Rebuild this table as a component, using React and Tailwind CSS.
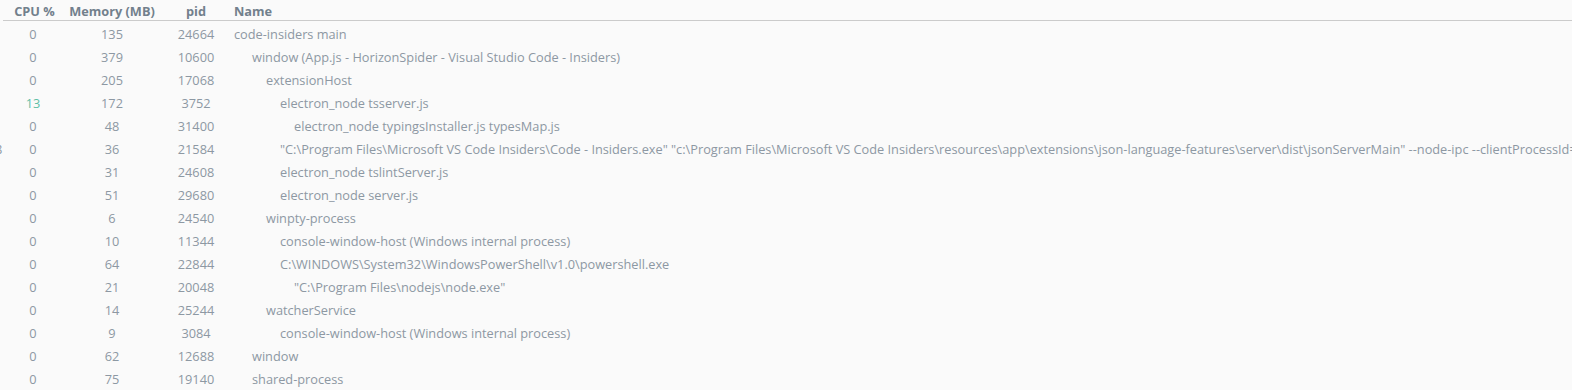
import React from 'react';

const rows = [
  { cpu: 0, mem: 135, pid: 24664, depth: 0, name: 'code-insiders main' },
  { cpu: 0, mem: 379, pid: 10600, depth: 1, name: 'window (App.js - HorizonSpider - Visual Studio Code - Insiders)' },
  { cpu: 0, mem: 205, pid: 17068, depth: 2, name: 'extensionHost' },
  { cpu: 13, mem: 172, pid: 3752, depth: 3, name: 'electron_node tsserver.js' },
  { cpu: 0, mem: 48, pid: 31400, depth: 4, name: 'electron_node typingsInstaller.js typesMap.js' },
  { cpu: 0, mem: 36, pid: 21584, depth: 3, name: '"C:\\Program Files\\Microsoft VS Code Insiders\\Code - Insiders.exe" "c:\\Program Files\\Microsoft VS Code Insiders\\resources\\app\\extensions\\json-language-features\\server\\dist\\jsonServerMain" --node-ipc --clientProcessId=17068', mark: true },
  { cpu: 0, mem: 31, pid: 24608, depth: 3, name: 'electron_node tslintServer.js' },
  { cpu: 0, mem: 51, pid: 29680, depth: 3, name: 'electron_node server.js' },
  { cpu: 0, mem: 6, pid: 24540, depth: 2, name: 'winpty-process' },
  { cpu: 0, mem: 10, pid: 11344, depth: 3, name: 'console-window-host (Windows internal process)' },
  { cpu: 0, mem: 64, pid: 22844, depth: 3, name: 'C:\\WINDOWS\\System32\\WindowsPowerShell\\v1.0\\powershell.exe' },
  { cpu: 0, mem: 21, pid: 20048, depth: 4, name: '"C:\\Program Files\\nodejs\\node.exe"' },
  { cpu: 0, mem: 14, pid: 25244, depth: 2, name: 'watcherService' },
  { cpu: 0, mem: 9, pid: 3084, depth: 3, name: 'console-window-host (Windows internal process)' },
  { cpu: 0, mem: 62, pid: 12688, depth: 1, name: 'window' },
  { cpu: 0, mem: 75, pid: 19140, depth: 1, name: 'shared-process' },
];

const indent = ['pl-0', 'pl-[18px]', 'pl-[32px]', 'pl-[46px]', 'pl-[60px]'];

export default function App() {
  return (
    <div className="w-[1572px] h-[390px] overflow-hidden bg-[#fafafa] text-[12.75px] text-[#8d98a3] font-['Open_Sans','Noto_Sans',sans-serif]">
      {/* header */}
      <div className="flex h-[21px] ml-[3px] pt-[1px] border-b border-[#cbcbcb] font-bold text-[#72808c] leading-[20px]">
        <div className="w-[63px] text-center">CPU %</div>
        <div className="w-[92px] text-center">Memory (MB)</div>
        <div className="w-[76px] text-center">pid</div>
        <div>Name</div>
      </div>

      <div className="pt-[2px]">
        {rows.map((r, i) => (
          <div key={i} className="relative flex h-[23px] items-center whitespace-nowrap">
            {r.mark && <span className="absolute left-[-5px] top-0 leading-[23px]">8</span>}
            <div className={`w-[66px] shrink-0 text-center ${r.cpu > 0 ? 'text-[#5fbfa6]' : ''}`}>{r.cpu}</div>
            <div className="w-[92px] shrink-0 text-center">{r.mem}</div>
            <div className="w-[76px] shrink-0 text-center">{r.pid}</div>
            <div className={indent[r.depth]}>{r.name}</div>
          </div>
        ))}
      </div>
    </div>
  );
}
